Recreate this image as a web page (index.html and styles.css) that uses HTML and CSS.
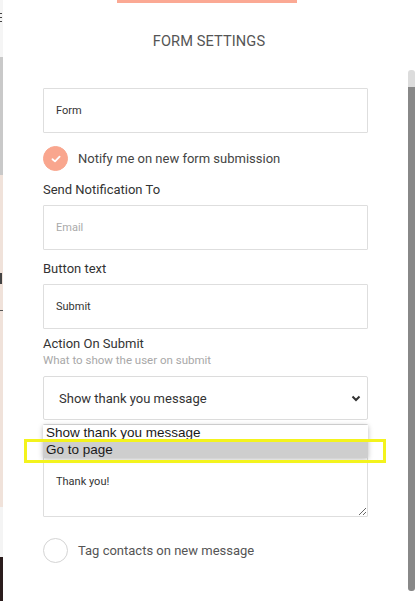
FILE: index.html
```html
<!DOCTYPE html>
<html>
<head>
<meta charset="utf-8">
<link rel="stylesheet" href="styles.css">
</head>
<body>
<div class="screen">
  <div class="backdrop-edge">
    <span class="edge-tick t1"></span>
    <span class="edge-tick t2"></span>
    <span class="edge-tick t3"></span>
    <span class="edge-mark"></span>
    <span class="edge-line"></span>
  </div>
  <div class="modal">
    <div class="accent-bar"></div>
    <h1 class="title">FORM SETTINGS</h1>
    <div class="form">
      <input class="field" type="text" value="Form">
      <div class="toggle-row first">
        <span class="circle checked">
          <svg width="10" height="8" viewBox="0 0 10 8"><polyline points="1.5,4.2 4,6.4 8.6,1.6" fill="none" stroke="#fff" stroke-width="1.8" stroke-linecap="round" stroke-linejoin="round"/></svg>
        </span>
        <span class="toggle-label">Notify me on new form submission</span>
      </div>
      <label class="label">Send Notification To</label>
      <input class="field" type="text" placeholder="Email">
      <label class="label">Button text</label>
      <input class="field" type="text" value="Submit">
      <label class="label action">Action On Submit</label>
      <div class="hint">What to show the user on submit</div>
      <div class="select-wrap">
        <div class="select">
          <span>Show thank you message</span>
          <svg class="chevron" width="10" height="7" viewBox="0 0 10 7"><polyline points="1.5,1.5 5,5 8.5,1.5" fill="none" stroke="#333" stroke-width="2"/></svg>
        </div>
        <div class="dropdown">
          <div class="option">Show thank you message</div>
          <div class="option selected">Go to page</div>
        </div>
        <div class="highlight-box"></div>
      </div>
      <textarea class="message">Thank you!</textarea>
      <div class="toggle-row last">
        <span class="circle"></span>
        <span class="toggle-label muted">Tag contacts on new message</span>
      </div>
    </div>
  </div>
  <div class="scrollbar">
    <div class="scroll-cap"></div>
    <div class="scroll-thumb"></div>
  </div>
</div>
</body>
</html>
```

FILE: styles.css
```css
html, body {
  margin: 0;
  padding: 0;
  background: #ffffff;
}

body {
  width: 415px;
  height: 601px;
  overflow: hidden;
  font-family: Roboto, "Liberation Sans", sans-serif;
}

.screen {
  display: flex;
  width: 415px;
  height: 601px;
}

.backdrop-edge {
  position: relative;
  width: 3px;
  flex: none;
  background: linear-gradient(to bottom,
    #f5f5f5 0, #f5f5f5 57px,
    #c9c9c9 57px, #c9c9c9 175px,
    #f0e2da 175px, #f0e2da 507px,
    #f4f4f4 507px, #f4f4f4 557px,
    #2a1c1c 557px, #2a1c1c 601px);
  overflow: hidden;
}

.edge-tick {
  position: absolute;
  left: 0;
  width: 2px;
  height: 1px;
  background: #444;
}

.edge-tick.t1 { top: 13px; }
.edge-tick.t2 { top: 17px; }
.edge-tick.t3 { top: 21px; }

.edge-mark {
  position: absolute;
  left: 0;
  top: 273px;
  width: 2px;
  height: 11px;
  background: #444;
}

.edge-line {
  position: absolute;
  left: 0;
  top: 310px;
  width: 3px;
  height: 1px;
  background: #555;
}

.modal {
  width: 405px;
  flex: none;
  background: #fff;
  border-bottom-left-radius: 4px;
  display: flex;
  flex-direction: column;
  align-items: center;
}

.accent-bar {
  width: 180px;
  height: 3px;
  background: #fba994;
  margin-left: 3px;
}

.title {
  margin: 30px 0 0 7px;
  font-size: 14.6px;
  line-height: 16px;
  font-weight: 400;
  color: #555;
  letter-spacing: 0.1px;
}

.form {
  width: 325px;
  margin-top: 39px;
  display: flex;
  flex-direction: column;
}

.field {
  box-sizing: border-box;
  width: 325px;
  height: 45px;
  border: 1px solid #dedede;
  border-radius: 1px;
  padding: 0 12px;
  font-family: Roboto, "Liberation Sans", sans-serif;
  font-size: 11px;
  color: #333;
  outline: none;
  margin: 0;
}

.field::placeholder {
  color: #aaa;
}

.toggle-row {
  display: flex;
  align-items: center;
  gap: 10px;
}

.toggle-row.first {
  margin-top: 13px;
}

.toggle-row.last {
  margin-top: 21px;
}

.circle {
  box-sizing: border-box;
  width: 25px;
  height: 25px;
  border-radius: 50%;
  border: 1px solid #d4d4d4;
  display: flex;
  align-items: center;
  justify-content: center;
  flex: none;
}

.circle.checked {
  background: #f9a68e;
  border-color: #f9a68e;
}

.toggle-label {
  font-size: 13px;
  color: #444;
  line-height: 16px;
}

.toggle-label.muted {
  color: #555;
}

.label {
  display: block;
  font-size: 13px;
  line-height: 16px;
  color: #333;
  margin: 11px 0 7px;
}

.label.action {
  margin: 7px 0 0;
}

.hint {
  font-size: 11.5px;
  line-height: 14px;
  color: #a8a8a8;
  margin-top: 1px;
  margin-bottom: 9px;
}

.select-wrap {
  position: relative;
}

.select {
  box-sizing: border-box;
  height: 44px;
  border: 1px solid #dcdcdc;
  border-radius: 2px;
  display: flex;
  align-items: center;
  justify-content: space-between;
  padding: 0 6px 0 15px;
  font-size: 13px;
  color: #333;
}

.chevron {
  margin-top: 1px;
}

.dropdown {
  position: absolute;
  left: 0;
  top: 49px;
  width: 325px;
  background: #fff;
  box-shadow: 0 1px 5px rgba(0, 0, 0, 0.28);
  z-index: 2;
  font-family: "Liberation Sans", Arial, sans-serif;
  font-size: 13.5px;
  color: #1a1a1a;
}

.option {
  height: 16px;
  line-height: 16px;
  padding: 0 3px;
}

.option.selected {
  height: 17px;
  line-height: 17px;
  background: #cecece;
}

.highlight-box {
  position: absolute;
  left: -19px;
  top: 63px;
  width: 356px;
  height: 18px;
  border: 3px solid #f3f31d;
  z-index: 3;
}

.message {
  box-sizing: border-box;
  display: block;
  width: 325px;
  height: 93px;
  margin: 4px 0 0;
  border: 1px solid #dedede;
  border-radius: 1px;
  padding: 50px 12px 8px;
  font-family: Roboto, "Liberation Sans", sans-serif;
  font-size: 11px;
  line-height: 14px;
  color: #333;
  outline: none;
  resize: both;
}

.scrollbar {
  width: 7px;
  flex: none;
  display: flex;
  flex-direction: column;
  padding-top: 70px;
  padding-bottom: 10px;
}

.scroll-cap {
  height: 17px;
  background: #dcdcdc;
  border-top-left-radius: 3px;
  border-top-right-radius: 3px;
}

.scroll-thumb {
  flex: 1;
  background: #888;
  border-bottom-left-radius: 3px;
  border-bottom-right-radius: 3px;
}
```
